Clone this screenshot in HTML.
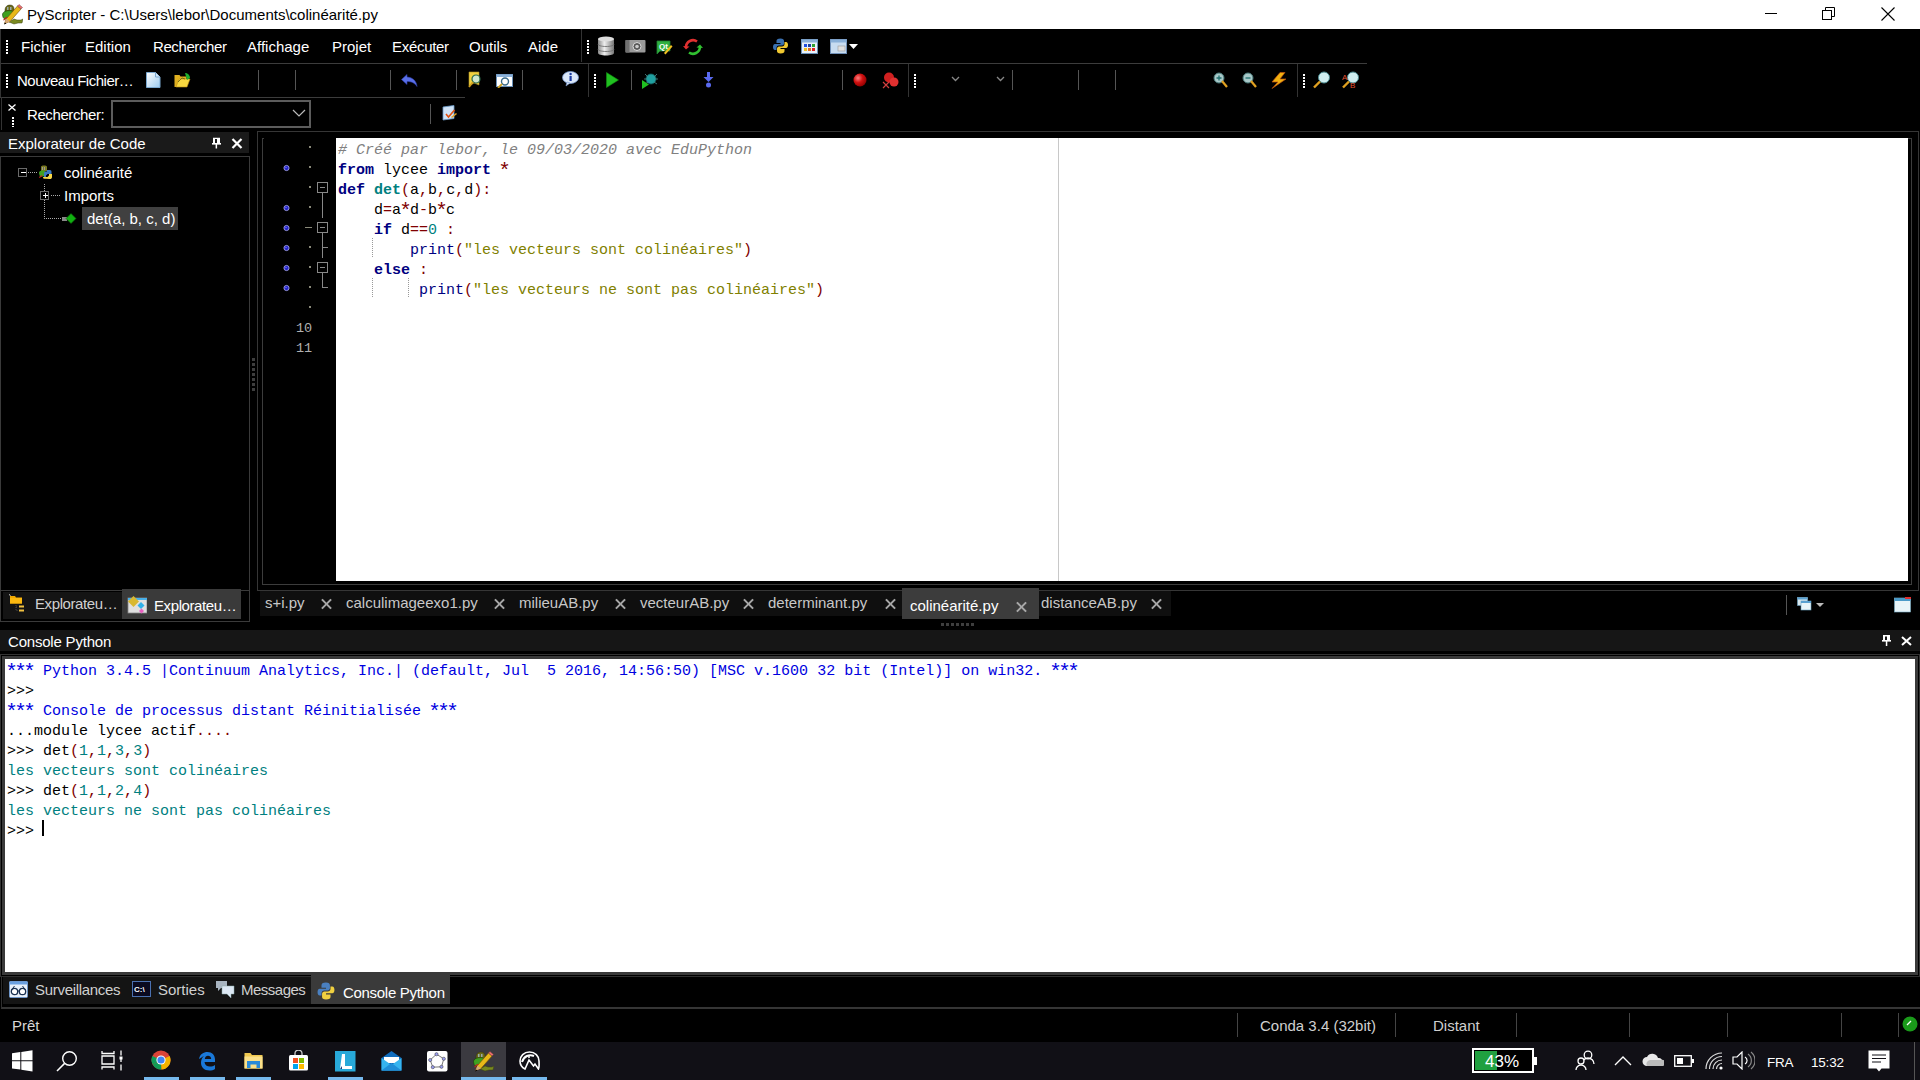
<!DOCTYPE html>
<html><head><meta charset="utf-8">
<style>
*{margin:0;padding:0;box-sizing:border-box}
html,body{width:1920px;height:1080px;overflow:hidden;background:#000;font-family:"Liberation Sans",sans-serif;font-size:15px;color:#fff}
.a{position:absolute}
.t{position:absolute;white-space:pre;line-height:1}
.mono{font-family:"Liberation Mono",monospace}
.vl{position:absolute;width:1px;background:#555}
.hl{position:absolute;height:1px;background:#3c3c3c}
.grip{position:absolute;width:2px;background:repeating-linear-gradient(#fff 0 2px,transparent 2px 3px)}
.code{position:absolute;white-space:pre;font-size:15px;line-height:20px;color:#000}
.cm{color:#808080;font-style:italic}
.kw{color:#000080;font-weight:bold}
.fn{color:#008080;font-weight:bold}
.op{color:#800000}
.nm{color:#008080}
.st{color:#808000}
.bi{color:#000080}
.cb{color:#0000e0}
.ct{color:#008080}
.bp{position:absolute;left:284px;width:5px;height:5px;border-radius:50%;background:#2424c8;box-shadow:0 0 0 0.6px #a0a0e8}
.fb{position:absolute;left:317px;width:11px;height:11px;border:1px solid #888}
.fb::after{content:"";position:absolute;left:2px;top:4px;width:5px;height:1px;background:#888}
.ig{width:1px;background:repeating-linear-gradient(#999 0 1px,transparent 1px 2px)}
.tb{position:absolute;width:9px;height:9px;border:1px solid #6a6a6a;background:#000}
.dh{position:absolute;height:1px;background:repeating-linear-gradient(90deg,#aaa 0 1px,transparent 1px 2px)}
.dv{position:absolute;width:1px;background:repeating-linear-gradient(#aaa 0 1px,transparent 1px 2px)}
.tab{color:#c8c8c8}
.tab2{color:#d0d0d0}
.tx{position:absolute;width:11px;height:11px}
.tx::before,.tx::after{content:"";position:absolute;left:-1px;top:4.5px;width:13px;height:2px;background:#a8a8a8;transform:rotate(45deg)}
.tx::after{transform:rotate(-45deg)}
.ast{display:inline-block;width:9px;transform:translateY(1.5px) scale(1.4)}
</style></head><body>

<!-- TITLE BAR -->
<div class="a" style="left:0;top:0;width:1920px;height:29px;background:#fff"></div>
<div class="t" id="title" style="left:27px;top:7px;color:#000;font-size:15px">PyScripter - C:\Users\lebor\Documents\colinéarité.py</div>


<svg class="a" style="left:2px;top:4px" width="21" height="21" viewBox="0 0 21 21"><path d="M7 18l5 2 4-1 4 0 1-4-2 1-4 0-3-1z" fill="#7a8a20" stroke="#3a4010" stroke-width="0.5"/><path d="M3 6c0-3 2-5 5-5s4 2 4 4v3H3z" fill="#6a6a18" stroke="#303010" stroke-width="0.5"/><rect x="5" y="3" width="1.5" height="3" fill="#9aa"/><rect x="8" y="3" width="1.5" height="3" fill="#9aa"/><path d="M0.5 10c1-3 5-4 10-3l2 2-3 4-6 2c-2 0-3-2-3-5z" fill="#40a020" stroke="#1a3a0a" stroke-width="0.6"/><path d="M1 16l3-3 2 0-4 3.5z" fill="#c02020"/><path d="M2.5 19.5l2-5 11-12.5 3.5 3-11 12.5z" fill="#e8b818" stroke="#704a08" stroke-width="0.6"/><path d="M15.5 2l1.5-1.5 3.5 3-1.5 1.5z" fill="#ee7070" stroke="#704040" stroke-width="0.5"/><path d="M2.5 19.5l2-5 3.5 3z" fill="#d8a878"/><path d="M2 20.5l1-2 1.5 1z" fill="#000"/></svg>
<div class="a" style="left:1765px;top:13px;width:12px;height:1px;background:#000"></div>
<svg class="a" style="left:1822px;top:7px" width="14" height="14" viewBox="0 0 14 14"><rect x="0.5" y="3.5" width="9" height="9" fill="none" stroke="#000"/><path d="M3.5 3.5V0.5h9v9h-3" fill="none" stroke="#000"/></svg>
<svg class="a" style="left:1881px;top:7px" width="14" height="14" viewBox="0 0 14 14"><path d="M0.5 0.5L13.5 13.5M13.5 0.5L0.5 13.5" stroke="#000" stroke-width="1.1"/></svg>

<!-- MENU BAR -->
<div class="a" style="left:0;top:29px;width:1px;height:34px;background:#333"></div>
<div class="grip" style="left:6px;top:40px;height:14px"></div>
<div class="t" style="left:21px;top:39px">Fichier</div>
<div class="t" style="left:85px;top:39px">Edition</div>
<div class="t" style="left:153px;top:39px;letter-spacing:-0.4px">Rechercher</div>
<div class="t" style="left:247px;top:39px">Affichage</div>
<div class="t" style="left:332px;top:39px">Projet</div>
<div class="t" style="left:392px;top:39px;letter-spacing:-0.3px">Exécuter</div>
<div class="t" style="left:469px;top:39px">Outils</div>
<div class="t" style="left:528px;top:39px">Aide</div>


<div class="a" style="left:581px;top:29px;width:1px;height:33px;background:#333"></div>
<div class="grip" style="left:587px;top:40px;height:14px"></div>
<svg class="a" style="left:596px;top:36px" width="20" height="20" viewBox="0 0 20 20"><defs><linearGradient id="db" x1="0" x2="1"><stop offset="0" stop-color="#888"/><stop offset="0.4" stop-color="#eee"/><stop offset="1" stop-color="#777"/></linearGradient></defs><path d="M2 3v14c0 1.5 3.5 2.5 8 2.5s8-1 8-2.5V3z" fill="url(#db)"/><ellipse cx="10" cy="3" rx="8" ry="2.5" fill="#ddd"/><path d="M2 8c0 1.5 3.5 2.5 8 2.5s8-1 8-2.5M2 13c0 1.5 3.5 2.5 8 2.5s8-1 8-2.5" stroke="#666" fill="none" stroke-width="0.8"/></svg>
<svg class="a" style="left:625px;top:39px" width="21" height="14" viewBox="0 0 21 14"><rect x="0.5" y="1" width="20" height="12.5" rx="1" fill="#9a9a9a"/><rect x="0.5" y="1" width="4" height="12.5" fill="#707070"/><circle cx="12" cy="7.5" r="4" fill="#555" stroke="#ddd" stroke-width="1"/><circle cx="12" cy="7.5" r="1.8" fill="#ccc"/></svg>
<svg class="a" style="left:656px;top:39px" width="17" height="16" viewBox="0 0 17 16"><path d="M1 2h13v10H4l-3 3z" fill="#30b040" stroke="#208030" stroke-width="0.8"/><text x="3" y="10" font-size="8" font-family="Liberation Sans" fill="#fff" font-weight="bold">Qt</text><path d="M8 14l7-8 1.5 1.5-7 8z" fill="#f0c020"/></svg>
<svg class="a" style="left:683px;top:38px" width="20" height="18" viewBox="0 0 20 18"><path d="M3 9a7 7 0 0 1 11-5.5" stroke="#e03030" stroke-width="2.6" fill="none"/><path d="M0 8l3 3.5 3.5-3z" fill="#e03030"/><path d="M17 9a7 7 0 0 1-11 5.5" stroke="#30c030" stroke-width="2.6" fill="none"/><path d="M20 10l-3-3.5-3.5 3z" fill="#30c030"/></svg>
<svg class="a" style="left:773px;top:38px" width="15" height="16" viewBox="0 0 15 16"><path d="M7.5 0.5c-3 0-4 1-4 2.5V5h4v1H2c-1.5 0-2 1.5-2 3s.5 3 2 3h1.5v-2c0-1.5 1-2.5 2.5-2.5h3c1 0 2-1 2-2V3c0-1.5-1-2.5-3.5-2.5z" fill="#3a70b0"/><path d="M7.5 15.5c3 0 4-1 4-2.5V11h-4v-1H13c1.5 0 2-1.5 2-3s-.5-3-2-3h-1.5v2c0 1.5-1 2.5-2.5 2.5H6c-1 0-2 1-2 2V13c0 1.5 1 2.5 3.5 2.5z" fill="#f0c830"/></svg>
<svg class="a" style="left:801px;top:39px" width="17" height="15" viewBox="0 0 17 15"><rect x="0.5" y="0.5" width="16" height="14" fill="#e8f0f8" stroke="#6a90b8"/><rect x="0.5" y="0.5" width="16" height="3" fill="#8ab0d8"/><rect x="3" y="5" width="3" height="3" fill="#2050e0"/><rect x="7" y="5" width="3" height="3" fill="#2040a0"/><rect x="11" y="5" width="3" height="3" fill="#30a030"/><rect x="3" y="9" width="3" height="3" fill="#f0c020"/><rect x="7" y="9" width="3" height="3" fill="#e07020"/><rect x="11" y="9" width="3" height="3" fill="#e02020"/></svg>
<svg class="a" style="left:830px;top:39px" width="17" height="15" viewBox="0 0 17 15"><rect x="0.5" y="0.5" width="16" height="14" fill="#c8dcf0" stroke="#7090b8"/><rect x="0.5" y="0.5" width="16" height="3" fill="#8ab0d8"/><rect x="8" y="7" width="7" height="5" fill="#e0e0e0" stroke="#999" stroke-width="0.6"/></svg>
<svg class="a" style="left:849px;top:44px" width="10" height="6"><path d="M0 0h9l-4.5 5z" fill="#fff"/></svg>

<!-- TOOLBAR 2 -->
<div class="hl" style="left:0;top:63px;width:1367px"></div>
<div class="t" style="left:17px;top:73px;letter-spacing:-0.5px">Nouveau Fichier…</div>


<div class="a" style="left:0;top:63px;width:1px;height:34px;background:#333"></div>
<div class="grip" style="left:6px;top:74px;height:14px"></div>
<svg class="a" style="left:146px;top:72px" width="15" height="16" viewBox="0 0 15 16"><defs><linearGradient id="nf" x1="0" y1="0" x2="1" y2="1"><stop offset="0" stop-color="#fff"/><stop offset="1" stop-color="#9ccbf0"/></linearGradient></defs><path d="M0.5 0.5h9l4.5 4.5v10.5h-13.5z" fill="url(#nf)" stroke="#7aa8d0"/><path d="M9.5 0.5v4.5h4.5" fill="#cfe6fa" stroke="#7aa8d0"/></svg>
<svg class="a" style="left:174px;top:72px" width="17" height="16" viewBox="0 0 17 16"><path d="M0.5 3h5l1 1.5h6v10.5h-12z" fill="#e0b020"/><path d="M2 15l3-8h11l-3 8z" fill="#f8d840" stroke="#c09010" stroke-width="0.6"/><path d="M4 10l4-4 3 1" stroke="#5a5a10" stroke-width="0.8" fill="none"/><path d="M11 1a5 5 0 0 1 5 5l-3 2z" fill="#20b030"/></svg>
<div class="vl" style="left:258px;top:70px;height:20px"></div>
<div class="vl" style="left:295px;top:70px;height:20px"></div>
<div class="vl" style="left:390px;top:70px;height:20px"></div>
<svg class="a" style="left:401px;top:74px" width="17" height="13" viewBox="0 0 17 13"><path d="M6 0.5L0.5 5.5 6 10.5V7.5c4 0 7.5 1 10 5-0.5-5-3.5-9-10-9.5z" fill="#5a70e8" stroke="#3040b0" stroke-width="0.6"/></svg>
<div class="vl" style="left:456px;top:70px;height:20px"></div>
<svg class="a" style="left:467px;top:71px" width="16" height="17" viewBox="0 0 16 17"><path d="M2 1h10v13l-5-2-5 3z" fill="#f0d040" stroke="#b09020" stroke-width="0.6"/><circle cx="9" cy="8" r="4" fill="#cfe8d0" stroke="#2a6a4a" stroke-width="1.2"/><path d="M6 11l-4 5" stroke="#d0a020" stroke-width="1.8"/></svg>
<svg class="a" style="left:496px;top:74px" width="17" height="14" viewBox="0 0 17 14"><rect x="0.5" y="0.5" width="16" height="12" fill="#fff" stroke="#6a90b8"/><rect x="0.5" y="0.5" width="16" height="2.5" fill="#8ab0d8"/><circle cx="9" cy="7.5" r="3.5" fill="none" stroke="#3a6a8a" stroke-width="1.4"/><path d="M6 10l-4 4" stroke="#d0a020" stroke-width="1.8"/></svg>
<div class="vl" style="left:522px;top:70px;height:20px"></div>
<svg class="a" style="left:562px;top:71px" width="17" height="16" viewBox="0 0 17 16"><ellipse cx="8.5" cy="6.5" rx="8" ry="6" fill="#dbe8fa" stroke="#7a9ad0" stroke-width="0.8"/><path d="M5 11l-1 4 4-3z" fill="#dbe8fa" stroke="#7a9ad0" stroke-width="0.6"/><rect x="7.5" y="5" width="2.2" height="5" fill="#1a3aa0"/><circle cx="8.6" cy="3" r="1.2" fill="#1a3aa0"/></svg>
<div class="a" style="left:588px;top:63px;width:1px;height:34px;background:#333"></div>
<div class="grip" style="left:594px;top:74px;height:14px"></div>
<svg class="a" style="left:606px;top:72px" width="13" height="16" viewBox="0 0 13 16"><path d="M0.5 0.5L12.5 8 0.5 15.5z" fill="#20c020" stroke="#109010" stroke-width="0.6"/></svg>
<div class="vl" style="left:631px;top:70px;height:20px"></div>
<svg class="a" style="left:641px;top:71px" width="18" height="18" viewBox="0 0 18 18"><ellipse cx="10" cy="8" rx="5" ry="5" fill="#20a0a0" stroke="#106060" stroke-width="0.8"/><path d="M4 3l3 3M16 3l-3 3M3 8h3M14 8h3M4 13l3-2M16 13l-3-2" stroke="#4a8a8a" stroke-width="0.8"/><path d="M1 9l7 4.5L1 18z" fill="#20c020"/></svg>
<svg class="a" style="left:703px;top:72px" width="11" height="16" viewBox="0 0 11 16"><rect x="4" y="0" width="3" height="6" fill="#5a6af0"/><path d="M0.5 5h10l-5 5z" fill="#5a6af0"/><circle cx="5.5" cy="13" r="2.5" fill="#5a6af0"/></svg>
<div class="vl" style="left:842px;top:70px;height:20px"></div>
<svg class="a" style="left:853px;top:73px" width="14" height="14" viewBox="0 0 14 14"><defs><radialGradient id="rb" cx="0.35" cy="0.35" r="0.7"><stop offset="0" stop-color="#ff8080"/><stop offset="0.5" stop-color="#d01010"/><stop offset="1" stop-color="#900000"/></radialGradient></defs><circle cx="7" cy="7" r="6.5" fill="url(#rb)"/></svg>
<svg class="a" style="left:882px;top:72px" width="17" height="17" viewBox="0 0 17 17"><circle cx="7" cy="5.5" r="5" fill="#d02020"/><circle cx="12" cy="10" r="4.5" fill="#e03030"/><path d="M1 10l6 6M7 10l-6 6" stroke="#d04040" stroke-width="1.2"/></svg>
<div class="a" style="left:908px;top:63px;width:1px;height:34px;background:#333"></div>
<div class="grip" style="left:914px;top:74px;height:14px"></div>
<svg class="a" style="left:951px;top:76px" width="9" height="6"><path d="M1 1l3.5 3.5L8 1" stroke="#888" stroke-width="1.3" fill="none"/></svg>
<svg class="a" style="left:996px;top:76px" width="9" height="6"><path d="M1 1l3.5 3.5L8 1" stroke="#888" stroke-width="1.3" fill="none"/></svg>
<div class="vl" style="left:1012px;top:70px;height:20px"></div>
<div class="vl" style="left:1078px;top:70px;height:20px"></div>
<div class="vl" style="left:1115px;top:70px;height:20px"></div>
<svg class="a" style="left:1213px;top:72px" width="15" height="16" viewBox="0 0 15 16"><circle cx="6" cy="6" r="5" fill="#a8c8c8" stroke="#4a7a7a" stroke-width="1"/><path d="M3.5 6h5M6 3.5v5" stroke="#207070" stroke-width="1.3"/><path d="M9 9l5 6" stroke="#e0a020" stroke-width="2.2"/></svg>
<svg class="a" style="left:1242px;top:72px" width="15" height="16" viewBox="0 0 15 16"><circle cx="6" cy="6" r="5" fill="#a8c8c8" stroke="#4a7a7a" stroke-width="1"/><path d="M3.5 6h5" stroke="#207070" stroke-width="1.3"/><path d="M9 9l5 6" stroke="#e0a020" stroke-width="2.2"/></svg>
<svg class="a" style="left:1271px;top:72px" width="16" height="17" viewBox="0 0 16 17"><path d="M9 0.5L1 10h6l-6 6.5L15 7H9l5-6.5z" fill="#f0b010" stroke="#c05010" stroke-width="0.7"/></svg>
<div class="a" style="left:1297px;top:63px;width:1px;height:34px;background:#333"></div>
<div class="grip" style="left:1303px;top:74px;height:14px"></div>
<svg class="a" style="left:1313px;top:71px" width="18" height="18" viewBox="0 0 18 18"><circle cx="11" cy="6.5" r="5.5" fill="#cfeef0" stroke="#4a8a90" stroke-width="1"/><path d="M7 10.5l-6 6" stroke="#e0a020" stroke-width="2.4"/></svg>
<svg class="a" style="left:1342px;top:71px" width="18" height="18" viewBox="0 0 18 18"><circle cx="11" cy="6.5" r="5.5" fill="#cfeef0" stroke="#4a8a90" stroke-width="1"/><path d="M7 10.5l-6 6" stroke="#e0a020" stroke-width="2.4"/><text x="0" y="9" font-size="8" font-family="Liberation Sans" fill="#e05030">A</text><text x="8" y="17" font-size="8" font-family="Liberation Sans" fill="#e05030">B</text></svg>
<div class="hl" style="left:588px;top:63px;width:779px"></div>

<!-- SEARCH BAR -->
<div class="hl" style="left:0;top:97px;width:465px"></div>
<div class="t" style="left:27px;top:107px;letter-spacing:-0.4px">Rechercher:</div>


<div class="a" style="left:1px;top:97px;width:1px;height:33px;background:#333"></div>
<svg class="a" style="left:8px;top:104px" width="8" height="7"><path d="M0.5 0.5l7 6M7.5 0.5l-7 6" stroke="#fff" stroke-width="1.3"/></svg>
<div class="grip" style="left:12px;top:117px;height:10px"></div>
<div class="a" style="left:111px;top:100px;width:200px;height:28px;border:2px solid #5c5c5c"></div>
<svg class="a" style="left:292px;top:109px" width="14" height="8"><path d="M1 1l6 6 6-6" stroke="#bbb" stroke-width="1.2" fill="none"/></svg>
<div class="vl" style="left:430px;top:104px;height:20px"></div>
<svg class="a" style="left:442px;top:105px" width="16" height="17" viewBox="0 0 16 17"><path d="M1 2l11-1.5v13l-11 1.5z" fill="#cfe3f7" stroke="#6a9ac8" stroke-width="0.8"/><path d="M4 9l2.5 3 6-7" stroke="#e05010" stroke-width="1.6" fill="none"/><path d="M9 12l5-4 1 1-5 4z" fill="#e0a020"/></svg>

<!-- LEFT PANEL -->
<div class="a" style="left:0;top:132px;width:249px;height:21px;background:#1a1a1a"></div>
<div class="t" style="left:8px;top:136px">Explorateur de Code</div>


<!-- header pin/close -->
<svg class="a" style="left:210px;top:136px" width="14" height="14" viewBox="0 0 14 14"><path d="M3 1.8h7v6h-7z M5 3v4h2V3z" fill="#fff" fill-rule="evenodd"/><rect x="2" y="7" width="9" height="1.6" fill="#fff"/><rect x="5.6" y="8" width="1.5" height="4.5" fill="#fff"/></svg>
<svg class="a" style="left:231px;top:138px" width="12" height="11" viewBox="0 0 12 11"><path d="M1.5 1L10.5 10M10.5 1L1.5 10" stroke="#fff" stroke-width="2.2"/></svg>
<!-- content box -->
<div class="a" style="left:0;top:156px;width:250px;height:435px;border:1px solid #3a3a3a;border-bottom:none"></div>
<!-- tree -->
<div class="tb" style="left:18px;top:168px"><div style="position:absolute;left:2px;top:3px;width:5px;height:1px;background:#fff"></div></div>
<div class="dh" style="left:28px;top:172px;width:10px"></div>
<div class="dv" style="left:44px;top:184px;height:35px"></div>
<div class="tb" style="left:40px;top:191px"><div style="position:absolute;left:2px;top:3px;width:5px;height:1px;background:#fff"></div><div style="position:absolute;left:4px;top:1px;width:1px;height:5px;background:#fff"></div></div>
<div class="dh" style="left:51px;top:195px;width:10px"></div>
<div class="dh" style="left:44px;top:218px;width:18px"></div>
<svg class="a" style="left:38px;top:165px" width="15" height="15" viewBox="0 0 15 15"><path d="M3 6V2c0-1 1-1.5 3-1.5s3 .5 3 1.5v4z" fill="#7a7a20"/><rect x="4" y="2" width="1" height="3" fill="#999"/><rect x="6" y="2" width="1" height="3" fill="#999"/><path d="M1 8c0-2 2-3 6-2l1 2-1 3-5 1z" fill="#40a020"/><path d="M1 12l3-2 .5 1-3 2z" fill="#d02020"/><path d="M9 5h3a1.5 1.5 0 0 1 1.5 1.5V9H9.5L8 10.5V12H6V8.5C6 7 7 6.5 8 6.5h1z" fill="#3a78c0"/><path d="M8.5 13.8h-2A1.5 1.5 0 0 1 5 12.3V12h4.5l1.5-1.5V9h3v3c0 1.5-1 2-2 2H11z" fill="#f8d848"/></svg>
<div class="t" style="left:64px;top:165px">colinéarité</div>
<div class="t" style="left:64px;top:188px">Imports</div>
<svg class="a" style="left:61px;top:213px" width="16" height="12" viewBox="0 0 16 12"><rect x="1" y="4" width="5" height="4" fill="#888"/><path d="M10 0.5l5 5-5 5-5-5z" fill="#10b010" stroke="#0a600a" stroke-width="0.6"/></svg>
<div class="a" style="left:82px;top:207px;width:96px;height:23px;background:#404040"></div>
<div class="t" style="left:87px;top:211px">det(a, b, c, d)</div>
<!-- bottom tabs -->
<div class="a" style="left:0;top:590px;width:250px;height:32px;border:1px solid #3a3a3a"></div>
<div class="a" style="left:3px;top:592px;width:119px;height:27px;background:#141414"></div>
<div class="a" style="left:122px;top:589px;width:119px;height:30px;background:#3a3a3a"></div>
<svg class="a" style="left:8px;top:593px" width="20" height="21" viewBox="0 0 20 21"><path d="M1 1.5l1.5 1" stroke="#ddd" stroke-width="1"/><path d="M2 3h5l1 1.5h6v6H2z" fill="#f0a800"/><path d="M2 5h12v5.5H2z" fill="#fbb810"/><path d="M8 12v2h2M8 14v3.5h2" stroke="#555" stroke-width="0.8" stroke-dasharray="1 1" fill="none"/><rect x="11" y="12.5" width="5" height="2" fill="#f0c040"/><rect x="11" y="16.5" width="5" height="2" fill="#f0c040"/></svg>
<div class="t tab2" style="left:35px;top:596px;letter-spacing:-0.4px">Explorateu…</div>
<svg class="a" style="left:127px;top:596px" width="20" height="19" viewBox="0 0 20 19"><rect x="1" y="2" width="19" height="15" fill="#e0e0e0" stroke="#888" stroke-width="0.8"/><rect x="1" y="2" width="19" height="2" fill="#4ab0e8"/><path d="M6.5 0L12 5.5 6.5 11 1 5.5z" fill="#d8b830"/><path d="M14 6l3.5 3.5L14 13l-3.5-3.5z" fill="#30b0e8"/><path d="M14.5 12.5l2.5 2.5-2.5 2.5-2.5-2.5z" fill="#e860c0"/></svg>
<div class="t" style="left:154px;top:598px;letter-spacing:-0.4px">Explorateu…</div>

<div class="a" style="left:252px;top:358px;width:3px;height:3px;background:#3e3e3e"></div><div class="a" style="left:252px;top:363px;width:3px;height:3px;background:#3e3e3e"></div><div class="a" style="left:252px;top:368px;width:3px;height:3px;background:#3e3e3e"></div><div class="a" style="left:252px;top:373px;width:3px;height:3px;background:#3e3e3e"></div><div class="a" style="left:252px;top:378px;width:3px;height:3px;background:#3e3e3e"></div><div class="a" style="left:252px;top:383px;width:3px;height:3px;background:#3e3e3e"></div><div class="a" style="left:252px;top:388px;width:3px;height:3px;background:#3e3e3e"></div>
<!-- EDITOR -->
<div class="a" style="left:257px;top:131px;width:1662px;height:460px;border:1px solid #363636"></div>
<div class="a" style="left:262px;top:138px;width:1650px;height:447px;border:1px solid #3c3c3c;border-top:none"></div>
<div class="a" style="left:262px;top:138px;width:2px;height:1px;background:#3c3c3c"></div>
<div class="a" style="left:1908px;top:138px;width:4px;height:1px;background:#3c3c3c"></div>
<div class="a" style="left:336px;top:138px;width:1572px;height:443px;background:#fff"></div>


<!-- GUTTER -->
<div class="a" style="left:309px;top:146px;width:2px;height:2px;background:#8a8a7a"></div>
<div class="a" style="left:309px;top:166px;width:2px;height:2px;background:#8a8a7a"></div>
<div class="a" style="left:309px;top:186px;width:2px;height:2px;background:#8a8a7a"></div>
<div class="a" style="left:309px;top:206px;width:2px;height:2px;background:#8a8a7a"></div>
<div class="a" style="left:305px;top:227px;width:7px;height:1px;background:#8a8a7a"></div>
<div class="a" style="left:309px;top:246px;width:2px;height:2px;background:#8a8a7a"></div>
<div class="a" style="left:309px;top:266px;width:2px;height:2px;background:#8a8a7a"></div>
<div class="a" style="left:309px;top:286px;width:2px;height:2px;background:#8a8a7a"></div>
<div class="a" style="left:309px;top:306px;width:2px;height:2px;background:#8a8a7a"></div>
<div class="t mono" style="left:296px;top:322px;font-size:13.5px;color:#b0b0b0">10</div>
<div class="t mono" style="left:296px;top:342px;font-size:13.5px;color:#b0b0b0">11</div>
<svg class="a" style="left:283px;top:164px" width="8" height="8" viewBox="0 0 8 8"><circle cx="3.5" cy="4" r="2.6" fill="#2222c0" stroke="#b0b0ee" stroke-width="0.8"/><circle cx="3" cy="3.5" r="0.8" fill="#6a6aff"/></svg>
<svg class="a" style="left:283px;top:204px" width="8" height="8" viewBox="0 0 8 8"><circle cx="3.5" cy="4" r="2.6" fill="#2222c0" stroke="#b0b0ee" stroke-width="0.8"/><circle cx="3" cy="3.5" r="0.8" fill="#6a6aff"/></svg>
<svg class="a" style="left:283px;top:224px" width="8" height="8" viewBox="0 0 8 8"><circle cx="3.5" cy="4" r="2.6" fill="#2222c0" stroke="#b0b0ee" stroke-width="0.8"/><circle cx="3" cy="3.5" r="0.8" fill="#6a6aff"/></svg>
<svg class="a" style="left:283px;top:244px" width="8" height="8" viewBox="0 0 8 8"><circle cx="3.5" cy="4" r="2.6" fill="#2222c0" stroke="#b0b0ee" stroke-width="0.8"/><circle cx="3" cy="3.5" r="0.8" fill="#6a6aff"/></svg>
<svg class="a" style="left:283px;top:264px" width="8" height="8" viewBox="0 0 8 8"><circle cx="3.5" cy="4" r="2.6" fill="#2222c0" stroke="#b0b0ee" stroke-width="0.8"/><circle cx="3" cy="3.5" r="0.8" fill="#6a6aff"/></svg>
<svg class="a" style="left:283px;top:284px" width="8" height="8" viewBox="0 0 8 8"><circle cx="3.5" cy="4" r="2.6" fill="#2222c0" stroke="#b0b0ee" stroke-width="0.8"/><circle cx="3" cy="3.5" r="0.8" fill="#6a6aff"/></svg>
<div class="fb" style="top:182px"></div>
<div class="fb" style="top:222px"></div>
<div class="fb" style="top:262px"></div>
<div class="a" style="left:322px;top:193px;width:1px;height:25px;background:#888"></div>
<div class="a" style="left:322px;top:233px;width:1px;height:25px;background:#888"></div>
<div class="a" style="left:322px;top:247px;width:6px;height:1px;background:#888"></div>
<div class="a" style="left:322px;top:273px;width:1px;height:15px;background:#888"></div>
<div class="a" style="left:322px;top:287px;width:6px;height:1px;background:#888"></div>
<!-- CODE -->
<div class="a ig" style="left:372px;top:238px;height:20px"></div>
<div class="a ig" style="left:372px;top:278px;height:20px"></div>
<div class="a ig" style="left:408px;top:278px;height:20px"></div>
<div class="code mono" style="left:338px;top:141px"><span class="cm"># Créé par lebor, le 09/03/2020 avec EduPython</span>
<span class="kw">from</span> lycee <span class="kw">import</span> <span class="op"><span class="ast">*</span></span>
<span class="kw">def</span> <span class="fn">det</span><span class="op">(</span>a<span class="op">,</span>b<span class="op">,</span>c<span class="op">,</span>d<span class="op">):</span>
    d<span class="op">=</span>a<span class="op"><span class="ast">*</span></span>d<span class="op">-</span>b<span class="op"><span class="ast">*</span></span>c
    <span class="kw">if</span> d<span class="op">==</span><span class="nm">0</span> <span class="op">:</span>
        <span class="bi">print</span><span class="op">(</span><span class="st">"les vecteurs sont colinéaires"</span><span class="op">)</span>
    <span class="kw">else</span> <span class="op">:</span>
         <span class="bi">print</span><span class="op">(</span><span class="st">"les vecteurs ne sont pas colinéaires"</span><span class="op">)</span>
</div>
<div class="a" style="left:1058px;top:138px;width:1px;height:443px;background:#c8c8c8"></div>


<!-- EDITOR TABS -->
<div class="a" style="left:260px;top:591px;width:911px;height:25px;background:#0f0f0f"></div>
<div class="a" style="left:902px;top:588px;width:137px;height:31px;background:#3c3c3c"></div>
<div class="t tab" style="left:265px;top:595px">s+i.py</div>
<div class="tx" style="left:321px;top:598px"></div>
<div class="t tab" style="left:346px;top:595px">calculimageexo1.py</div>
<div class="tx" style="left:494px;top:598px"></div>
<div class="t tab" style="left:519px;top:595px">milieuAB.py</div>
<div class="tx" style="left:615px;top:598px"></div>
<div class="t tab" style="left:640px;top:595px">vecteurAB.py</div>
<div class="tx" style="left:743px;top:598px"></div>
<div class="t tab" style="left:768px;top:595px">determinant.py</div>
<div class="tx" style="left:885px;top:598px"></div>
<div class="t" style="left:910px;top:598px">colinéarité.py</div>
<div class="tx" style="left:1016px;top:601px"></div>
<div class="t tab" style="left:1041px;top:595px">distanceAB.py</div>
<div class="tx" style="left:1151px;top:598px"></div>
<div class="vl" style="left:1786px;top:595px;height:20px;background:#555"></div>
<svg class="a" style="left:1797px;top:597px" width="17" height="15" viewBox="0 0 17 15"><rect x="0.5" y="0.5" width="10" height="8" fill="#d8e8f0" stroke="#6aa0c0" stroke-width="0.6"/><rect x="0.5" y="0.5" width="10" height="2" fill="#5aa0d0"/><rect x="4" y="4" width="10" height="9" fill="#e8f4f8" stroke="#6aa0c0" stroke-width="0.6"/><rect x="4" y="4" width="10" height="2" fill="#5aa0d0"/></svg>
<svg class="a" style="left:1816px;top:603px" width="9" height="5"><path d="M0 0h8l-4 4z" fill="#bbb"/></svg>
<svg class="a" style="left:1894px;top:597px" width="17" height="16" viewBox="0 0 17 16"><rect x="0.5" y="1" width="16" height="14" fill="#e8f4f8" stroke="#7ab0c8" stroke-width="0.6"/><rect x="0.5" y="1" width="16" height="3" fill="#4a9ac8"/><rect x="11" y="0" width="6" height="2" fill="#e03030"/></svg>
<div class="a" style="left:941px;top:623px;width:3px;height:3px;background:#3e3e3e"></div><div class="a" style="left:946px;top:623px;width:3px;height:3px;background:#3e3e3e"></div><div class="a" style="left:951px;top:623px;width:3px;height:3px;background:#3e3e3e"></div><div class="a" style="left:956px;top:623px;width:3px;height:3px;background:#3e3e3e"></div><div class="a" style="left:961px;top:623px;width:3px;height:3px;background:#3e3e3e"></div><div class="a" style="left:966px;top:623px;width:3px;height:3px;background:#3e3e3e"></div><div class="a" style="left:971px;top:623px;width:3px;height:3px;background:#3e3e3e"></div>

<!-- CONSOLE -->
<div class="a" style="left:0;top:630px;width:1920px;height:21px;background:#161616"></div>
<div class="t" style="left:8px;top:634px;letter-spacing:-0.2px">Console Python</div>
<div class="a" style="left:0;top:654px;width:1920px;height:323px;border:1px solid #333;background:#000"></div>
<div class="a" style="left:2px;top:656px;width:1916px;height:319px;background:#3a3a3a"></div>
<div class="a" style="left:5px;top:659px;width:1910px;height:313px;background:#fff"></div>


<div class="code mono" style="left:7px;top:662px"><span class="cb"><span class="ast">*</span><span class="ast">*</span><span class="ast">*</span> Python 3.4.5 |Continuum Analytics, Inc.| (default, Jul  5 2016, 14:56:50) [MSC v.1600 32 bit (Intel)] on win32. <span class="ast">*</span><span class="ast">*</span><span class="ast">*</span></span>
>>>
<span class="cb"><span class="ast">*</span><span class="ast">*</span><span class="ast">*</span> Console de processus distant Réinitialisée <span class="ast">*</span><span class="ast">*</span><span class="ast">*</span></span>
...module lycee actif<span class="op">....</span>
>>> det<span class="op">(</span><span class="nm">1</span><span class="op">,</span><span class="nm">1</span><span class="op">,</span><span class="nm">3</span><span class="op">,</span><span class="nm">3</span><span class="op">)</span>
<span class="ct">les vecteurs sont colinéaires</span>
>>> det<span class="op">(</span><span class="nm">1</span><span class="op">,</span><span class="nm">1</span><span class="op">,</span><span class="nm">2</span><span class="op">,</span><span class="nm">4</span><span class="op">)</span>
<span class="ct">les vecteurs ne sont pas colinéaires</span>
>>> </div>
<div class="a" style="left:42px;top:820px;width:2px;height:16px;background:#000"></div>


<!-- BOTTOM TABS -->
<div class="a" style="left:1px;top:976px;width:1919px;height:33px;border:1px solid #2e2e2e;border-bottom:2px solid #353535;border-right:none"></div>
<div class="a" style="left:3px;top:977px;width:308px;height:27px;background:#141414"></div>
<div class="a" style="left:311px;top:975px;width:139px;height:29px;background:#3a3a3a"></div>
<svg class="a" style="left:9px;top:981px" width="19" height="17" viewBox="0 0 19 17"><rect x="0.5" y="0.5" width="18" height="16" rx="1" fill="#e8f0fa" stroke="#6a9ad8" stroke-width="0.8"/><rect x="0.5" y="0.5" width="18" height="3" fill="#6aa0e0"/><circle cx="5.5" cy="10.5" r="3.2" fill="#fff" stroke="#1a3050" stroke-width="1.3"/><circle cx="13.5" cy="10.5" r="3.2" fill="#fff" stroke="#1a3050" stroke-width="1.3"/><path d="M2.5 9l3-4M16.5 9l-3-4M8.7 10h1.6" stroke="#1a3050" stroke-width="1"/></svg>
<div class="t tab2" style="left:35px;top:982px;letter-spacing:-0.3px">Surveillances</div>
<svg class="a" style="left:132px;top:981px" width="19" height="16" viewBox="0 0 19 16"><rect x="0.5" y="0.5" width="18" height="15" fill="#0a0a20" stroke="#4a70b0" stroke-width="1"/><text x="2" y="11" font-size="8" font-family="Liberation Sans" font-weight="bold" fill="#fff">C:\</text></svg>
<div class="t tab2" style="left:158px;top:982px">Sorties</div>
<svg class="a" style="left:215px;top:980px" width="20" height="19" viewBox="0 0 20 19"><path d="M1 1h11v7H6l-3 3V8H1z" fill="#a8b4c0"/><path d="M7 6h12v8h-3v4l-4-4H7z" fill="#dde8f4" stroke="#8aa" stroke-width="0.5"/></svg>
<div class="t tab2" style="left:241px;top:982px;letter-spacing:-0.5px">Messages</div>
<svg class="a" style="left:317px;top:982px" width="18" height="18" viewBox="0 0 15 16"><path d="M7.5 0.5c-3 0-4 1-4 2.5V5h4v1H2c-1.5 0-2 1.5-2 3s.5 3 2 3h1.5v-2c0-1.5 1-2.5 2.5-2.5h3c1 0 2-1 2-2V3c0-1.5-1-2.5-3.5-2.5z" fill="#4a80c0"/><path d="M7.5 15.5c3 0 4-1 4-2.5V11h-4v-1H13c1.5 0 2-1.5 2-3s-.5-3-2-3h-1.5v2c0 1.5-1 2.5-2.5 2.5H6c-1 0-2 1-2 2V13c0 1.5 1 2.5 3.5 2.5z" fill="#f0d040"/></svg>
<div class="t" style="left:343px;top:985px;letter-spacing:-0.3px">Console Python</div>

<svg class="a" style="left:1881px;top:634px" width="12" height="14" viewBox="0 0 12 14"><path d="M2 1h7v6H2z M4 2.5v3.5h2V2.5z" fill="#fff" fill-rule="evenodd"/><rect x="1" y="6" width="9" height="1.6" fill="#fff"/><rect x="4.8" y="7" width="1.5" height="5" fill="#fff"/></svg>
<svg class="a" style="left:1901px;top:636px" width="11" height="10" viewBox="0 0 11 10"><path d="M1 1l9 8M10 1L1 9" stroke="#fff" stroke-width="2"/></svg>

<!-- STATUS BAR -->
<div class="t" style="left:12px;top:1018px;color:#d8d8d8">Prêt</div>


<div class="vl" style="left:1237px;top:1013px;height:24px;background:#444"></div>
<div class="t tab2" style="left:1260px;top:1018px">Conda 3.4 (32bit)</div>
<div class="vl" style="left:1395px;top:1013px;height:24px;background:#444"></div>
<div class="t tab2" style="left:1433px;top:1018px">Distant</div>
<div class="vl" style="left:1516px;top:1013px;height:24px;background:#444"></div>
<div class="vl" style="left:1629px;top:1013px;height:24px;background:#444"></div>
<div class="vl" style="left:1727px;top:1013px;height:24px;background:#444"></div>
<div class="vl" style="left:1841px;top:1013px;height:24px;background:#444"></div>
<div class="vl" style="left:1898px;top:1013px;height:24px;background:#444"></div>
<svg class="a" style="left:1902px;top:1016px" width="16" height="16" viewBox="0 0 16 16"><circle cx="8" cy="8" r="7.5" fill="#1a9a1a"/><path d="M5 9l4-4" stroke="#fff" stroke-width="1.3"/></svg>

<!-- TASKBAR -->
<div class="a" style="left:0;top:1042px;width:1920px;height:38px;background:#111016"></div>
<svg class="a" style="left:12px;top:1050px" width="21" height="22" viewBox="0 0 21 22"><path d="M0 3.2L8.3 2v8.3H0z M9.3 1.9L20.5 0.3v10H9.3z M0 11.3h8.3v8.3L0 18.4z M9.3 11.3h11.2v10.1L9.3 19.8z" fill="#fff"/></svg>
<svg class="a" style="left:56px;top:1050px" width="22" height="22" viewBox="0 0 22 22"><circle cx="13.5" cy="8.5" r="6.8" fill="none" stroke="#fff" stroke-width="1.4"/><path d="M8.6 13.4L1 21" stroke="#fff" stroke-width="1.5"/></svg>
<svg class="a" style="left:101px;top:1050px" width="22" height="21" viewBox="0 0 22 21"><path d="M1 1v2.5h12V1M1 19.5V17h12v2.5M1 6h12v8H1z M20 0.5v5 M20 8v4 M20 14.5v6" stroke="#fff" stroke-width="1.3" fill="none"/><rect x="18.5" y="6.5" width="3" height="3" fill="#fff"/></svg>
<svg class="a" style="left:151px;top:1050px" width="20" height="20" viewBox="0 0 20 20"><circle cx="10" cy="10" r="9.5" fill="#db4437"/><path d="M10 10L1.8 14.8A9.5 9.5 0 0 0 10.5 19.5z" fill="#0f9d58"/><path d="M10 10l8.7-4A9.5 9.5 0 0 1 10.5 19.5z" fill="#f4b400"/><path d="M10 10L1.8 14.8A9.5 9.5 0 0 1 1.3 6z" fill="#0f9d58"/><circle cx="10" cy="10" r="4.6" fill="#fff"/><circle cx="10" cy="10" r="3.6" fill="#4285f4"/></svg>
<svg class="a" style="left:198px;top:1051px" width="18" height="20" viewBox="0 0 18 20"><path d="M1 8C2 3 5.5 1 9.5 1 14 1 17 4 17 8.5V11H6.5c0.3 3 2.5 4.5 5.5 4.5 2 0 3.5-.5 5-1.5v4c-1.5 1-3.5 1.5-5.5 1.5C6 19.5 3 16 3 11.5 3 9 4 6.5 6 5c-2 1-4 2.5-5 3z M6.8 8h6.4c-.2-2-1.5-3.2-3.2-3.2S7.2 6 6.8 8z" fill="#1a78d8" fill-rule="evenodd"/></svg>
<svg class="a" style="left:244px;top:1052px" width="19" height="17" viewBox="0 0 19 17"><path d="M0.5 1h6l1.5 2h10.5v13.5H0.5z" fill="#f0c850"/><path d="M0.5 4.5h18v12H0.5z" fill="#fbe08a"/><path d="M3 9h13v7h-3.5v-3.5h-6V16H3z" fill="#2a8ad8"/></svg>
<svg class="a" style="left:288px;top:1050px" width="21" height="21" viewBox="0 0 21 21"><path d="M7 5V3.5a3.5 3.5 0 0 1 7 0V5" stroke="#ccc" stroke-width="1.3" fill="none"/><rect x="1" y="5" width="19" height="15.5" rx="1.5" fill="#fff"/><rect x="5" y="8" width="5" height="5" fill="#f25022"/><rect x="11" y="8" width="5" height="5" fill="#7fba00"/><rect x="5" y="14" width="5" height="5" fill="#00a4ef"/><rect x="11" y="14" width="5" height="5" fill="#ffb900"/></svg>
<svg class="a" style="left:335px;top:1051px" width="21" height="21" viewBox="0 0 21 21"><rect width="20.5" height="20.5" fill="#28a9d9"/><path d="M7 3h3v12h7v3H5z" fill="#fff"/><path d="M5 18l2-3 0 3z" fill="#153a80"/></svg>
<svg class="a" style="left:381px;top:1050px" width="21" height="21" viewBox="0 0 21 21"><path d="M0.5 8L10.5 1 20.5 8v12.5H0.5z" fill="#0f6cbd"/><path d="M3 7h15v6H3z" fill="#fff"/><path d="M0.5 8L10.5 15 20.5 8v12.5H0.5z" fill="#36b4ef"/><path d="M0.5 20.5L10.5 13 20.5 20.5z" fill="#1f8ed8"/></svg>
<svg class="a" style="left:427px;top:1051px" width="21" height="21" viewBox="0 0 21 21"><rect width="20.5" height="20.5" rx="2" fill="#fff"/><path d="M9.5 3.2L16.8 7.8 14.5 15.8 5.8 16.2 3.2 9z" fill="none" stroke="#555" stroke-width="0.8"/><g fill="#9a9ef0" stroke="#333" stroke-width="0.5"><circle cx="9.5" cy="3.2" r="1.6"/><circle cx="16.8" cy="7.8" r="1.6"/><circle cx="14.5" cy="15.8" r="1.6"/><circle cx="5.8" cy="16.2" r="1.6"/><circle cx="3.2" cy="9" r="1.6"/></g></svg>
<div class="a" style="left:461px;top:1042px;width:45px;height:38px;background:#3b3a40"></div>
<svg class="a" style="left:473px;top:1051px" width="21" height="21" viewBox="0 0 21 21"><path d="M7 18l5 2 4-1 4 0 1-4-2 1-4 0-3-1z" fill="#7a8a20" stroke="#3a4010" stroke-width="0.5"/><path d="M3 6c0-3 2-5 5-5s4 2 4 4v3H3z" fill="#6a6a18" stroke="#303010" stroke-width="0.5"/><rect x="5" y="3" width="1.5" height="3" fill="#9aa"/><rect x="8" y="3" width="1.5" height="3" fill="#9aa"/><path d="M0.5 10c1-3 5-4 10-3l2 2-3 4-6 2c-2 0-3-2-3-5z" fill="#40a020" stroke="#1a3a0a" stroke-width="0.6"/><path d="M1 16l3-3 2 0-4 3.5z" fill="#c02020"/><path d="M2.5 19.5l2-5 11-12.5 3.5 3-11 12.5z" fill="#e8b818" stroke="#704a08" stroke-width="0.6"/><path d="M15.5 2l1.5-1.5 3.5 3-1.5 1.5z" fill="#ee7070" stroke="#704040" stroke-width="0.5"/><path d="M2.5 19.5l2-5 3.5 3z" fill="#d8a878"/><path d="M2 20.5l1-2 1.5 1z" fill="#000"/></svg>
<svg class="a" style="left:519px;top:1051px" width="21" height="19" viewBox="0 0 21 19"><path d="M10.5 1C5 1 1 5 1 10c0 3.5 2 6.5 5 8L10 9l4.5 6 1.5-2 3.5 5C20.5 16 20 13 20 10 20 5 16 1 10.5 1z" fill="none" stroke="#fff" stroke-width="1.6"/><path d="M3 11C5 5 10 3 15 5" stroke="#fff" stroke-width="2" fill="none"/><circle cx="10" cy="6" r="1" fill="#fff"/></svg>
<div class="a" style="left:144px;top:1077px;width:35px;height:3px;background:#76b9ed"></div>
<div class="a" style="left:190px;top:1077px;width:35px;height:3px;background:#76b9ed"></div>
<div class="a" style="left:236px;top:1077px;width:35px;height:3px;background:#76b9ed"></div>
<div class="a" style="left:328px;top:1077px;width:35px;height:3px;background:#76b9ed"></div>
<div class="a" style="left:461px;top:1077px;width:45px;height:3px;background:#76b9ed"></div>
<div class="a" style="left:512px;top:1077px;width:35px;height:3px;background:#76b9ed"></div>
<!-- tray -->
<div class="a" style="left:1472px;top:1048px;width:62px;height:25px;border:2px solid #fff;background:#000"></div>
<div class="a" style="left:1475px;top:1051px;width:22px;height:19px;background:#20a040"></div>
<div class="a" style="left:1534px;top:1057px;width:3px;height:8px;background:#fff"></div>
<div class="t" style="left:1485px;top:1053px;font-size:17px;color:#fff">43%</div>
<svg class="a" style="left:1575px;top:1050px" width="20" height="21" viewBox="0 0 20 21"><circle cx="13" cy="5" r="3.8" fill="none" stroke="#fff" stroke-width="1.3"/><path d="M7 14a6 6 0 0 1 12 0" fill="none" stroke="#fff" stroke-width="1.3"/><circle cx="6" cy="11" r="3" fill="#111016" stroke="#fff" stroke-width="1.3"/><path d="M1 20a5 5 0 0 1 10 0" fill="none" stroke="#fff" stroke-width="1.3"/></svg>
<svg class="a" style="left:1614px;top:1056px" width="18" height="10"><path d="M1 9l8-8 8 8" fill="none" stroke="#fff" stroke-width="1.3"/></svg>
<svg class="a" style="left:1642px;top:1052px" width="22" height="15" viewBox="0 0 22 15"><path d="M5 14a4.5 4.5 0 0 1 0-9 6 6 0 0 1 11 1 4 4 0 0 1 1 8z" fill="#e8e8e8"/><path d="M5 14a4 4 0 0 1 3-6h11a3 3 0 0 1 2 6z" fill="#bbb"/></svg>
<svg class="a" style="left:1674px;top:1055px" width="20" height="12" viewBox="0 0 20 12"><rect x="0.7" y="0.7" width="16.6" height="10.6" fill="none" stroke="#fff" stroke-width="1.3"/><rect x="3" y="3" width="6" height="6" fill="#fff"/><rect x="18" y="4" width="2" height="4" fill="#fff"/></svg>
<svg class="a" style="left:1705px;top:1052px" width="19" height="18" viewBox="0 0 19 18"><path d="M1 17A16 16 0 0 1 17 1 M4.5 17A12.5 12.5 0 0 1 17 4.5 M8 17A9 9 0 0 1 17 8 M11.5 17A5.5 5.5 0 0 1 17 11.5" fill="none" stroke="#ddd" stroke-width="1.2"/><circle cx="16" cy="16" r="1.6" fill="#fff"/></svg>
<svg class="a" style="left:1732px;top:1051px" width="23" height="19" viewBox="0 0 23 19"><path d="M1 6h4l5-5v17l-5-5H1z" fill="none" stroke="#fff" stroke-width="1.2"/><path d="M13 6a4 4 0 0 1 0 7" fill="none" stroke="#fff" stroke-width="1.2"/><path d="M16 3a8 8 0 0 1 0 13 M19 1a11 11 0 0 1 0 17" fill="none" stroke="#888" stroke-width="1.2"/></svg>
<div class="t" style="left:1767px;top:1056px;color:#fff;font-size:13.5px;letter-spacing:-0.3px">FRA</div>
<div class="t" style="left:1811px;top:1056px;color:#fff;font-size:13.5px;letter-spacing:-0.2px">15:32</div>
<svg class="a" style="left:1868px;top:1050px" width="22" height="24" viewBox="0 0 22 24"><path d="M0.5 0.5h21v18h-8l-2.5 3-2.5-3h-8z" fill="#fff"/><path d="M4 5h14M4 8.5h14M4 12h9" stroke="#111016" stroke-width="1.2"/></svg>
<div class="a" style="left:1914px;top:1042px;width:1px;height:38px;background:#555"></div>

</body></html>
